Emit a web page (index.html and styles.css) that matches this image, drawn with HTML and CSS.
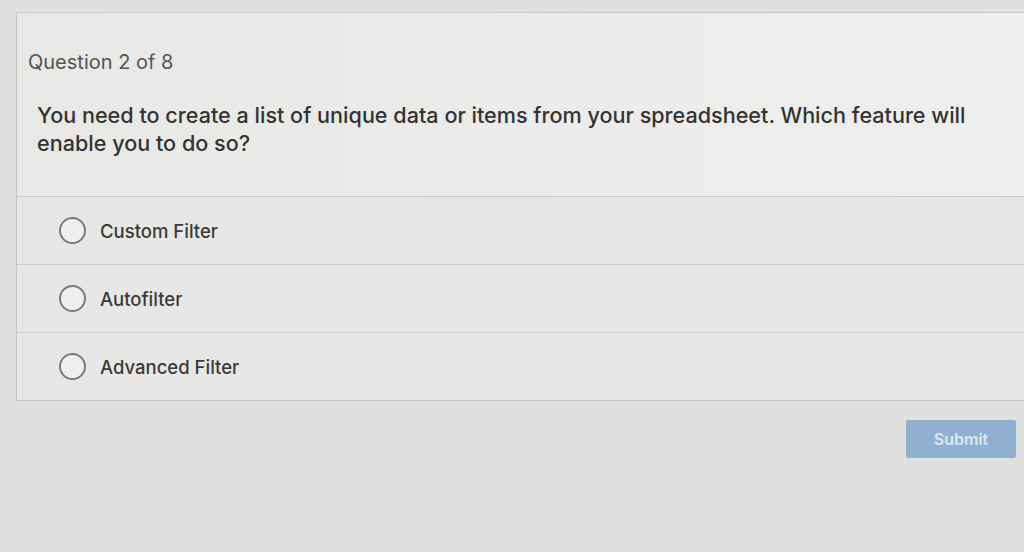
FILE: index.html
```html
<!DOCTYPE html>
<html lang="en">
<head>
  <meta charset="UTF-8">
  <meta name="viewport" content="width=device-width, initial-scale=1.0">
  <title>Quiz</title>
  <link rel="stylesheet" href="styles.css">
</head>
<body>
  <div class="page">
    <div class="card">
      <div class="question">
        <div class="count">Question 2 of 8</div>
        <p class="prompt">You need to create a list of unique data or items from your spreadsheet. Which feature will enable you to do so?</p>
      </div>
      <div class="options">
        <label class="option"><span class="radio"></span><span class="label">Custom Filter</span></label>
        <label class="option"><span class="radio"></span><span class="label">Autofilter</span></label>
        <label class="option"><span class="radio"></span><span class="label">Advanced Filter</span></label>
      </div>
    </div>
    <div class="actions">
      <button class="submit-btn">Submit</button>
    </div>
  </div>
</body>
</html>
```

FILE: styles.css
```css
body {
  margin: 0;
  background-color: #e0e0de;
  font-family: Inter, "Liberation Sans", Arial, sans-serif;
  color: #333;
}

.page {
  padding-top: 12px;
}

.card {
  margin-left: 16px;
  border-top: 1px solid #c9c9c7;
  border-left: 1px solid #c4c4c2;
  border-bottom: 1px solid #c4c4c2;
  background-color: #ebebe9;
}

.question {
  padding: 35px 20px 0 11px;
  height: 148px;
  border-bottom: 1px solid #c6c6c4;
  background: linear-gradient(90deg, #e8e8e6 0%, #ececea 60%, #efefed 100%);
}

.count {
  font-size: 20px;
  color: #555;
  line-height: 28px;
}

.prompt {
  margin: 25px 0 0 9px;
  font-size: 21.6px;
  font-weight: 500;
  line-height: 28px;
  color: #333;
  max-width: 950px;
}

.options {
  background-color: #e7e7e5;
}

.option {
  display: flex;
  align-items: center;
  height: 67px;
  padding-left: 42px;
  border-bottom: 1px solid #cbcbc9;
}

.option:last-child {
  border-bottom: none;
}

.radio {
  width: 23px;
  height: 23px;
  border: 2px solid #7a7a7a;
  border-radius: 50%;
  background-color: #efefed;
}

.label {
  margin-left: 14px;
  font-size: 18.5px;
  font-weight: 500;
  color: #3a3a3a;
}

.actions {
  display: flex;
  justify-content: flex-end;
  padding: 19px 8px 0 0;
}

.submit-btn {
  width: 110px;
  height: 38px;
  border: none;
  border-radius: 2px;
  background-color: #8fb0d0;
  color: #dde7f1;
  font-family: Inter, "Liberation Sans", Arial, sans-serif;
  font-size: 16px;
  font-weight: 600;
}
```
